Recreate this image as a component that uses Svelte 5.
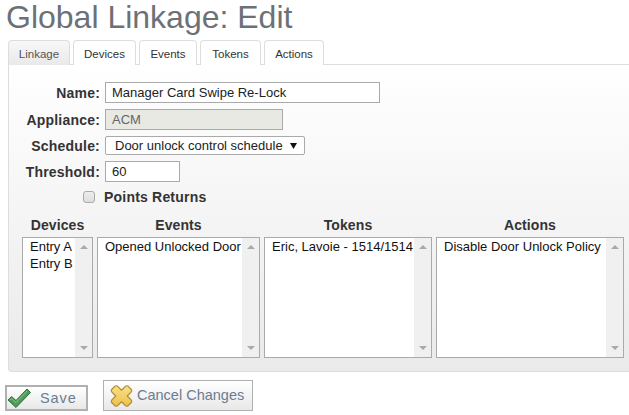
<script lang="ts">
  interface ListColumn {
    readonly title: string;
    readonly items: readonly string[];
  }

  const tabs = ["Linkage", "Devices", "Events", "Tokens", "Actions"];

  const columns: readonly ListColumn[] = [
    { title: "Devices", items: ["Entry A", "Entry B"] },
    { title: "Events", items: ["Opened Unlocked Door"] },
    { title: "Tokens", items: ["Eric, Lavoie - 1514/1514"] },
    { title: "Actions", items: ["Disable Door Unlock Policy"] },
  ];
</script>

<div class="page">
  <h1>Global Linkage: Edit</h1>

  <nav class="tabs">
    {#each tabs as tab, i}
      <button type="button" class="tab" class:active={i === 0}>{tab}</button>
    {/each}
  </nav>

  <section class="panel">
    <form class="fields">
      <span class="label">Name:</span>
      <input class="name" type="text" value="Manager Card Swipe Re-Lock" />

      <span class="label">Appliance:</span>
      <input class="appliance" type="text" value="ACM" disabled />

      <span class="label">Schedule:</span>
      <div class="select">
        <span>Door unlock control schedule</span>
        <svg width="7" height="6" viewBox="0 0 7 6"><path d="M0 0h7L3.500 6z" fill="#111" /></svg>
      </div>

      <span class="label">Threshold:</span>
      <input class="threshold" type="text" value="60" />
    </form>

    <label class="points">
      <span class="checkbox"></span>
      <span>Points Returns</span>
    </label>

    <div class="lists">
      {#each columns as column}
        <div class="column">
          <div class="column-title">{column.title}</div>
          <div class="listbox">
            <div class="options">
              {#each column.items as item}
                <div class="option">{item}</div>
              {/each}
            </div>
            <div class="scrollbar">
              <svg width="8" height="4" viewBox="0 0 8 4"><path d="M0 4L4 0l4 4z" fill="#a9a9a9" /></svg>
              <svg width="8" height="4" viewBox="0 0 8 4"><path d="M0 0h8L4 4z" fill="#a9a9a9" /></svg>
            </div>
          </div>
        </div>
      {/each}
    </div>
  </section>

  <div class="actions">
    <button type="button" class="save">
      <svg width="24" height="20" viewBox="0 0 24 20">
        <path d="M1 12l3.500-3.500L9 12.500 20 1l3.500 3.500L9 19.500z" fill="#4f9a58" stroke="#2f6f3c" stroke-width="1" stroke-linejoin="round" />
        <path d="M3 12l1.500-1.500L9 14.500 20 3" fill="none" stroke="#8cc492" stroke-width="1" />
      </svg>
      <span>Save</span>
    </button>
    <button type="button" class="cancel">
      <svg width="23" height="24" viewBox="0 0 24 24">
        <defs>
          <linearGradient id="cancel-fill" x1="0" y1="0" x2="0" y2="1">
            <stop offset="0" stop-color="#f8e08a" />
            <stop offset="1" stop-color="#efc04a" />
          </linearGradient>
        </defs>
        <path d="M5.500 1.500Q7 1 8 2l4 4 4-4q1-1 2.500-.5l4 4q.5 1.500-.5 2.500l-4 4 4 4q1 1 .5 2.500l-4 4q-1.500.5-2.500-.5l-4-4-4 4q-1 1-2.500.5l-4-4Q1 17 2 16l4-4-4-4Q1 7 1.500 5.500z" fill="url(#cancel-fill)" stroke="#b08a2c" stroke-width="1.200" stroke-linejoin="round" />
      </svg>
      <span>Cancel Changes</span>
    </button>
  </div>
</div>

<style>
  :global(body) {
    margin: 0;
    background: #fff;
    overflow: hidden;
  }

  .page {
    width: 629px;
    height: 415px;
    overflow: hidden;
    font-family: "Liberation Sans", Arial, sans-serif;
    font-size: 13px;
    color: #222;
  }

  h1 {
    margin: 0;
    padding: 0 0 0 6px;
    height: 40px;
    font-size: 32px;
    line-height: 35px;
    font-weight: normal;
    color: #6c7177;
  }

  .tabs {
    display: flex;
    gap: 3px;
    margin-left: 8px;
    height: 24px;
  }

  .tab {
    box-sizing: border-box;
    height: 25px;
    width: 61px;
    padding: 2px 0 0;
    border: 1px solid #ddd;
    border-bottom: none;
    border-radius: 4px 4px 0 0;
    background: #fff;
    font: 11.500px "Liberation Sans", Arial, sans-serif;
    color: #333;
    position: relative;
  }

  .tab:nth-child(1) {
    width: 62px;
  }

  .tab:nth-child(2) {
    width: 63px;
  }

  .tab:nth-child(3) {
    width: 58px;
  }

  .tab:nth-child(5) {
    width: 60px;
  }

  .tab.active {
    background: linear-gradient(#f8f8f8, #e9e9e9);
    color: #555;
  }

  .panel {
    box-sizing: border-box;
    margin-left: 8px;
    width: 630px;
    height: 308px;
    padding: 17px 0 0 14px;
    border: 1px solid #ddd;
    border-right: none;
    border-radius: 0 0 0 4px;
    background: linear-gradient(#fff, #eaeaea);
  }

  .fields {
    display: grid;
    grid-template-columns: 77px auto;
    column-gap: 5px;
    row-gap: 6px;
    justify-items: start;
    align-items: center;
  }

  .label {
    justify-self: end;
    font-size: 14px;
    font-weight: bold;
    color: #333;
    letter-spacing: 0.2px;
  }

  input {
    box-sizing: border-box;
    height: 21px;
    padding: 0 6px;
    border: 1px solid #aaa;
    background: #fff;
    font: 13px "Liberation Sans", Arial, sans-serif;
    color: #222;
  }

  .name {
    width: 275px;
  }

  .appliance {
    width: 178px;
    background: #e9e9e3;
    color: #666;
  }

  .threshold {
    width: 75px;
  }

  .select {
    box-sizing: border-box;
    display: flex;
    align-items: center;
    justify-content: space-between;
    width: 200px;
    height: 19px;
    padding: 0 7px 0 9px;
    border: 1px solid #aaa;
    border-radius: 2px;
    background: #fff;
    white-space: nowrap;
  }

  .points {
    display: flex;
    align-items: center;
    gap: 9px;
    margin: 7px 0 0 60px;
    font-size: 14px;
    font-weight: bold;
    color: #333;
    letter-spacing: 0.2px;
  }

  .checkbox {
    box-sizing: border-box;
    width: 12px;
    height: 12px;
    border: 1px solid #aaa;
    border-radius: 3px;
    background: linear-gradient(#eee, #ddd);
  }

  .lists {
    display: grid;
    grid-template-columns: 71px 163px 168px 188px;
    column-gap: 4px;
    margin-top: 11px;
    margin-left: -1px;
  }

  .column-title {
    height: 21px;
    line-height: 18px;
    text-align: center;
    font-size: 14px;
    font-weight: bold;
    color: #333;
    letter-spacing: 0.1px;
  }

  .listbox {
    box-sizing: border-box;
    display: flex;
    height: 121px;
    border: 1px solid #aaa;
    background: #fff;
  }

  .options {
    flex: 1;
    min-width: 0;
    padding: 0 0 0 7px;
    line-height: 17px;
    white-space: nowrap;
    overflow: hidden;
    color: #111;
  }

  .scrollbar {
    width: 17px;
    flex: none;
    display: flex;
    flex-direction: column;
    align-items: center;
    justify-content: space-between;
    padding: 7px 0;
    box-sizing: border-box;
    background: #f0f0f0;
  }

  .actions {
    display: flex;
    align-items: flex-end;
    gap: 15px;
    margin: 8px 0 0 5px;
    height: 31px;
  }

  .actions button {
    box-sizing: border-box;
    display: flex;
    align-items: center;
    padding: 0;
    background: linear-gradient(#fff, #e8e8e8);
    font-family: "Liberation Sans", Arial, sans-serif;
    font-size: 14.500px;
    color: #6b7c92;
  }

  .save {
    width: 83px;
    height: 26px;
    gap: 9px;
    border: 2px solid #b0b0b0;
    letter-spacing: 0.9px;
  }

  .cancel {
    width: 150px;
    height: 31px;
    gap: 4px;
    padding-left: 6px !important;
    border: 1px solid #b0b0b0;
  }

  .cancel span {
    margin-bottom: 2px;
  }
</style>
